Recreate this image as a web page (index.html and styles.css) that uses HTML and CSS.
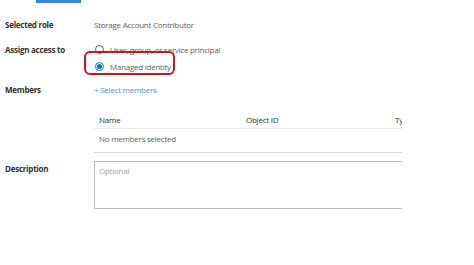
FILE: index.html
```html
<!DOCTYPE html>
<html>
<head>
    <meta charset="UTF-8">
    <title>Add role assignment</title>
    <link rel="stylesheet" href="styles.css">
</head>
<body>
    <div class="tabs">
        <div class="tab-active"></div>
    </div>
    <div class="form">
        <div class="row row-role">
            <div class="label">Selected role</div>
            <div class="value">Storage Account Contributor</div>
        </div>
        <div class="row row-access">
            <div class="label">Assign access to</div>
            <div class="options">
                <label class="option">
                    <span class="radio"></span>
                    <span>User, group, or service principal</span>
                </label>
                <label class="option">
                    <span class="radio checked"></span>
                    <span>Managed identity</span>
                </label>
                <div class="highlight"></div>
            </div>
        </div>
        <div class="row row-members">
            <div class="label">Members</div>
            <div class="link">+ Select members</div>
        </div>
        <div class="row row-table">
            <div class="label"></div>
            <div class="table">
                <div class="thead">
                    <div class="col-name">Name</div>
                    <div class="col-id">Object ID</div>
                    <div class="col-type">Type</div>
                </div>
                <div class="tbody">No members selected</div>
            </div>
        </div>
        <div class="row row-desc">
            <div class="label">Description</div>
            <div class="textarea">Optional</div>
        </div>
    </div>
</body>
</html>
```

FILE: styles.css
```css
/* Role assignment form */
body {
    margin: 0;
    background-color: #fff;
    font-family: "Open Sans", "Noto Sans", sans-serif;
    font-size: 8px;
    line-height: 11px;
    letter-spacing: -0.25px;
    color: #323130;
}

.tabs {
    height: 3px;
}

.tab-active {
    margin-left: 36px;
    width: 45px;
    height: 3px;
    background-color: #3a86d4;
}

.form {
    width: 397px;
    padding-left: 5px;
    overflow: hidden;
}

.row {
    display: flex;
}

.label {
    width: 89px;
    flex-shrink: 0;
    font-weight: bold;
}

.value {
    color: #605e5c;
}

.row-role {
    margin-top: 16px;
}

.row-access {
    margin-top: 14px;
}

.options {
    position: relative;
    display: flex;
    flex-direction: column;
    gap: 6px;
}

.option {
    display: flex;
    align-items: center;
    gap: 6px;
    color: #605e5c;
    padding-left: 1px;
}

.radio {
    width: 9px;
    height: 9px;
    border: 1px solid #605e5c;
    border-radius: 50%;
    box-sizing: border-box;
}

.radio.checked {
    border-color: #0078d4;
    display: flex;
    align-items: center;
    justify-content: center;
}

.radio.checked::after {
    content: "";
    width: 5px;
    height: 5px;
    border-radius: 50%;
    background-color: #0078d4;
}

.highlight {
    position: absolute;
    left: -10px;
    top: 7px;
    width: 87px;
    height: 20px;
    border: 2px solid #d8101a;
    border-radius: 6px;
}

.row-members {
    margin-top: 12px;
}

.link {
    color: #4a8fd8;
}

.row-table {
    margin-top: 19px;
}

.table {
    flex: 1;
}

.thead {
    display: flex;
    padding: 0 0 3px 5px;
    border-bottom: 1px solid #edebe9;
}

.col-name {
    width: 147px;
}

.col-id {
    width: 149px;
}

.col-type {
    white-space: nowrap;
}

.tbody {
    padding: 4px 5px 8px;
    color: #605e5c;
    border-bottom: 1px solid #d6d6d6;
}

.row-desc {
    margin-top: 8px;
}

.row-desc .label {
    padding-top: 2px;
}

.textarea {
    flex: 1;
    height: 48px;
    box-sizing: border-box;
    padding: 3px 4px;
    border: 1px solid #bdbdbd;
    border-right: none;
    color: #a19f9d;
}
```
